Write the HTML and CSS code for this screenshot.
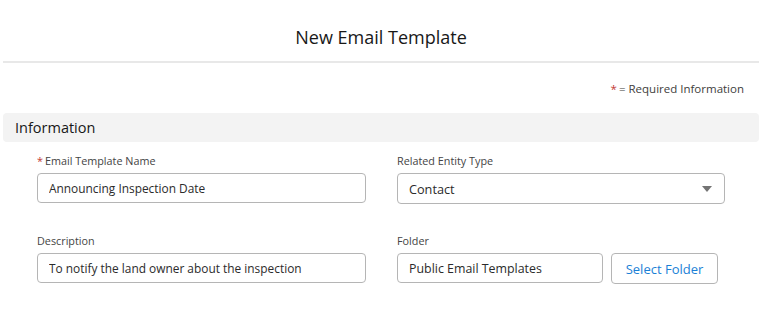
FILE: index.html
```html
<!DOCTYPE html>
<html lang="en">
<head>
  <meta charset="UTF-8"/>
  <meta name="viewport" content="width=device-width,initial-scale=1.0"/>
  <title>New Email Template</title>
  <link rel="stylesheet" href="styles.css">
</head>
<body>
  <div class="modal">
    <header class="modal-header">
      <h1>New Email Template</h1>
    </header>
    <p class="required-note"><span class="req">*</span> = Required Information</p>
    <h2 class="section-title">Information</h2>
    <form class="form-grid">
      <div class="field">
        <label for="name"><span class="req">*</span>Email Template Name</label>
        <input id="name" type="text" value="Announcing Inspection Date"/>
      </div>
      <div class="field">
        <label for="entity">Related Entity Type</label>
        <div class="select-wrap">
          <div id="entity" class="select">Contact</div>
          <svg class="caret" width="12" height="8" viewBox="0 0 12 8"><path d="M1 1h10L6 7z" fill="#747474"/></svg>
        </div>
      </div>
      <div class="field">
        <label for="desc">Description</label>
        <input id="desc" type="text" value="To notify the land owner about the inspection"/>
      </div>
      <div class="field">
        <label for="folder">Folder</label>
        <div class="folder-row">
          <input id="folder" type="text" value="Public Email Templates"/>
          <button type="button">Select Folder</button>
        </div>
      </div>
    </form>
  </div>
</body>
</html>
```

FILE: styles.css
```css
body { margin:0; background:#fff; font-family:'Open Sans', 'Noto Sans', sans-serif; color:#181818; }
.modal { width:768px; height:318px; overflow:hidden; }
.modal-header { margin:0 9px 0 3px; height:61px; border-bottom:2px solid #e8e8e8; display:flex; align-items:center; justify-content:center; }
h1 { margin:0; font-size:18px; font-weight:400; color:#181818; padding-top:12px; }
.required-note { margin:0; height:50px; display:flex; align-items:center; justify-content:flex-end; padding-right:24px; font-size:11.5px; color:#3e3e3c; }
.req { color:#c23934; margin-right:2px; }
.section-title { margin:0 9px 0 3px; height:29px; background:#f3f3f3; border-radius:4px; display:flex; align-items:center; padding-left:12px; font-size:14.5px; font-weight:400; color:#181818; }
.form-grid { display:grid; grid-template-columns:329px 328px; column-gap:31px; row-gap:29px; padding:11px 0 0 37px; }
.field { display:flex; flex-direction:column; }
label { font-size:10.8px; color:#444; height:20px; line-height:15px; }
input, .select { box-sizing:border-box; height:30px; border:1px solid #b5b5b5; border-radius:4px; padding:0 11px; font-family:inherit; font-size:11.9px; color:#2b2b2b; background:#fff; }
.select { display:flex; align-items:center; font-size:12.7px; height:31px; }
.select-wrap { position:relative; }
.caret { position:absolute; right:12px; top:12px; }
.folder-row { display:flex; gap:8px; }
.folder-row input { width:206px; font-size:12.4px; }
button { height:31px; width:107px; box-sizing:border-box; border:1px solid #b5b5b5; border-radius:4px; background:#fff; color:#1b7fd6; font-family:inherit; font-size:13px; padding:0; }
```
